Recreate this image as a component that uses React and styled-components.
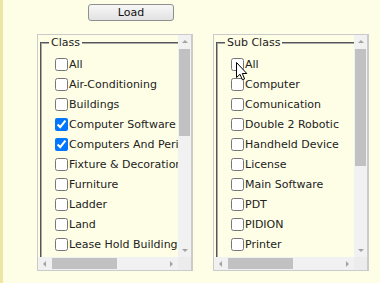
import React from 'react';
import styled, { createGlobalStyle, css } from 'styled-components';

const GlobalStyle = createGlobalStyle`
  html, body { margin: 0; padding: 0; background: #fefee6; }
  body { font-family: "DejaVu Sans", Verdana, sans-serif; font-size: 11px; color: #222; }
`;

const Page = styled.div`
  position: relative;
  box-sizing: border-box;
  width: 380px;
  height: 283px;
  border-left: 3px solid #ece5a3;
  padding: 4px 0 0 34px;
  overflow: hidden;
`;

const Toolbar = styled.div`
  display: flex;
  height: 17px;
  padding-left: 51px;
`;

const LoadButton = styled.button`
  width: 86px;
  height: 17px;
  box-sizing: border-box;
  padding: 0;
  border: 1px solid #8f8f8f;
  border-radius: 3px;
  background: linear-gradient(#f7f7f7, #e2e2e2);
  font: 11px "DejaVu Sans", Verdana, sans-serif;
  line-height: 15px;
  color: #111;
`;

const Panels = styled.div`
  display: flex;
  align-items: flex-start;
  gap: 20px;
  margin-top: 13px;
`;

const ScrollFrame = styled.div`
  display: grid;
  grid-template-columns: 140px 13px;
  grid-template-rows: 222px 13px;
  width: 156px;
  height: 237px;
  box-sizing: border-box;
  border: 1px solid #cbcbcb;
  border-right-width: 2px;
  background: #fefee6;
  overflow: hidden;
`;

const Viewport = styled.div`
  overflow: hidden;
  min-width: 0;
  min-height: 0;
`;

const VBar = styled.div`
  display: flex;
  flex-direction: column;
  background: #f1f1f1;
`;

const HBar = styled.div`
  display: flex;
  background: #f1f1f1;
`;

const Corner = styled.div`
  background: #ececec;
`;

const ArrowButton = styled.div`
  flex: none;
  width: 13px;
  height: 13px;
  display: flex;
  align-items: center;
  justify-content: center;
`;

const arrowShapes = {
  up: css`
    border-left: 3px solid transparent;
    border-right: 3px solid transparent;
    border-bottom: 3px solid #a3a3a3;
  `,
  down: css`
    border-left: 3px solid transparent;
    border-right: 3px solid transparent;
    border-top: 3px solid #a3a3a3;
  `,
  left: css`
    border-top: 3px solid transparent;
    border-bottom: 3px solid transparent;
    border-right: 3px solid #a3a3a3;
  `,
  right: css`
    border-top: 3px solid transparent;
    border-bottom: 3px solid transparent;
    border-left: 3px solid #a3a3a3;
  `,
};

const Arrow = styled.span`
  width: 0;
  height: 0;
  ${({ $dir }) => arrowShapes[$dir]}
`;

const VTrack = styled.div`
  flex: 1;
  padding: 1px;
`;

const HTrack = styled.div`
  flex: 1;
  display: flex;
  padding: 1px;
`;

const VThumb = styled.div`
  width: 11px;
  background: #c1c1c1;
`;

const HThumb = styled.div`
  height: 11px;
  background: #c1c1c1;
`;

const Group = styled.fieldset`
  box-sizing: border-box;
  width: 246px;
  min-width: 0;
  margin: 1px 2px 0;
  padding: 5px 7px 10px;
  border: 2px groove #aaaaaa;
`;

const Legend = styled.legend`
  padding: 0 2px;
  font-size: 11px;
  line-height: 13px;
  color: #222;
`;

const List = styled.div`
  display: flex;
  flex-direction: column;
  margin-left: 6px;
`;

const Row = styled.label`
  display: flex;
  align-items: center;
  height: 20px;
  white-space: nowrap;
  color: #222;
`;

const Check = styled.input.attrs({ type: 'checkbox' })`
  flex: none;
  width: 13px;
  height: 13px;
  margin: 0 1px 0 0;
`;

const Cursor = styled.svg`
  position: absolute;
  left: 233px;
  top: 62px;
  pointer-events: none;
`;

const classItems = [
  ['All', false],
  ['Air-Conditioning', false],
  ['Buildings', false],
  ['Computer Software', true],
  ['Computers And Peripherals', true],
  ['Fixture & Decoration', false],
  ['Furniture', false],
  ['Ladder', false],
  ['Land', false],
  ['Lease Hold Building', false],
  ['Machinery', false],
  ['Motor Vehicle', false],
  ['Office Equipment', false],
  ['Plant & Machinery', false],
  ['Renovation', false],
  ['Security System', false],
  ['Signboard', false],
  ['Telecommunication', false],
  ['Tools & Equipment', false],
  ['Vehicle', false],
  ['Warehouse', false],
  ['Water Supply', false],
  ['Others', false],
];

const subClassItems = [
  'All',
  'Computer',
  'Comunication',
  'Double 2 Robotic',
  'Handheld Device',
  'License',
  'Main Software',
  'PDT',
  'PIDION',
  'Printer',
  'Router',
  'Scanner',
  'Server',
  'Tablet',
  'UPS',
  'Workstation',
  'Others',
].map((s) => [s, false]);

function CheckPanel({ title, items, vThumb, hThumb }) {
  return (
    <ScrollFrame>
      <Viewport>
        <Group>
          <Legend>{title}</Legend>
          <List>
            {items.map(([label, checked]) => (
              <Row key={label}>
                <Check defaultChecked={checked} />
                <span>{label}</span>
              </Row>
            ))}
          </List>
        </Group>
      </Viewport>
      <VBar>
        <ArrowButton><Arrow $dir="up" /></ArrowButton>
        <VTrack>
          <VThumb style={{ height: vThumb }} />
        </VTrack>
        <ArrowButton><Arrow $dir="down" /></ArrowButton>
      </VBar>
      <HBar>
        <ArrowButton><Arrow $dir="left" /></ArrowButton>
        <HTrack>
          <HThumb style={{ width: hThumb }} />
        </HTrack>
        <ArrowButton><Arrow $dir="right" /></ArrowButton>
      </HBar>
      <Corner />
    </ScrollFrame>
  );
}

export default function App() {
  return (
    <>
      <GlobalStyle />
      <Page>
        <Toolbar>
          <LoadButton type="button">Load</LoadButton>
        </Toolbar>
        <Panels>
          <CheckPanel title="Class" items={classItems} vThumb={87} hThumb={65} />
          <CheckPanel title="Sub Class" items={subClassItems} vThumb={117} hThumb={65} />
        </Panels>
        <Cursor width="12" height="19" viewBox="0 0 12 19">
          <path
            d="M0.5 0.5 L0.5 15.5 L4 12.3 L6.4 17.8 L8.6 16.9 L6.3 11.5 L10.8 11.5 Z"
            fill="#fff"
            stroke="#000"
            strokeWidth="1"
            strokeLinejoin="round"
          />
        </Cursor>
      </Page>
    </>
  );
}
